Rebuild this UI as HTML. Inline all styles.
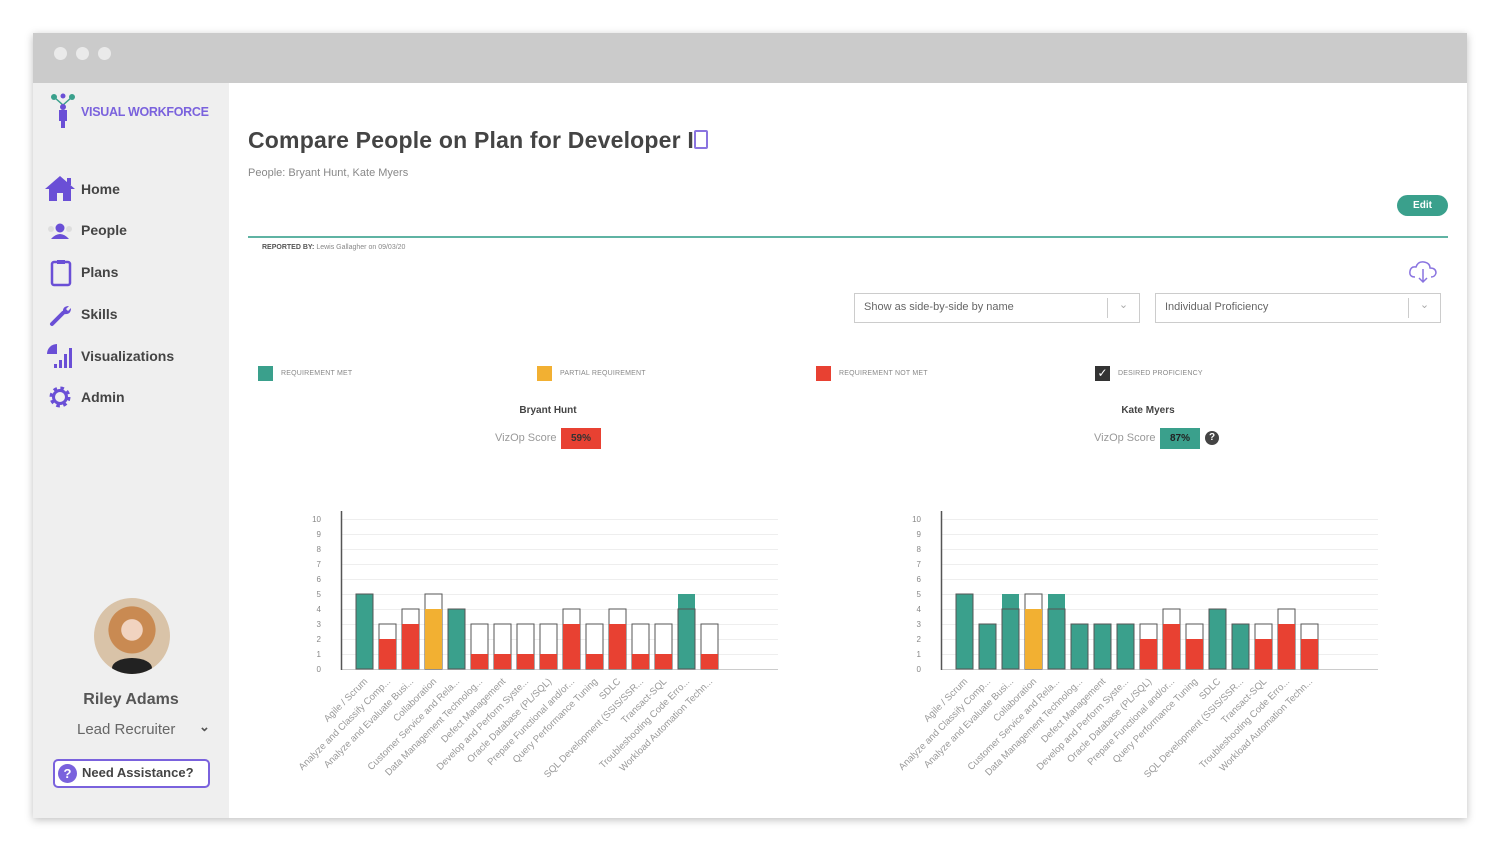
<!DOCTYPE html>
<html><head><meta charset="utf-8"><style>
*{margin:0;padding:0;box-sizing:border-box}
body{width:1500px;height:853px;background:#fff;position:relative;overflow:hidden;font-family:"Liberation Sans",sans-serif;color:#444}
.win{position:absolute;left:33px;top:33px;width:1434px;height:785px;background:#fff;box-shadow:0 2px 8px rgba(0,0,0,.25)}
.bar{position:absolute;left:0;top:0;width:1434px;height:50px;background:#cbcbcb}
.dot{position:absolute;top:14px;width:13px;height:13px;border-radius:50%;background:#eaeaea}
.side{position:absolute;left:0;top:50px;width:196px;height:735px;background:#efefef}
.nav{position:absolute;left:48px;font-weight:bold;font-size:14px;color:#444}
.abs{position:absolute}
.sel{position:absolute;height:30px;border:1px solid #ccc;font-size:11px;color:#666;padding:7px 9px}
.leg{position:absolute;font-size:7px;color:#888;letter-spacing:.2px}
.sw{position:absolute;width:15px;height:15px}
</style></head><body>
<div class="win">
 <div class="bar"><div class="dot" style="left:21px"></div><div class="dot" style="left:43px"></div><div class="dot" style="left:65px"></div></div>
 <div class="side">
  <svg class="abs" style="left:16px;top:10px" width="28" height="36" viewBox="0 0 28 36"><circle cx="5" cy="4" r="3" fill="#3aa08c"/><circle cx="23" cy="4" r="3" fill="#3aa08c"/><circle cx="14" cy="3" r="2.5" fill="#6a4fd6"/><path d="M5 4 L14 12 L23 4" stroke="#3aa08c" stroke-width="1.5" fill="none"/><circle cx="14" cy="14" r="3" fill="#6a4fd6"/><rect x="10" y="17" width="8" height="11" fill="#6a4fd6"/><rect x="12" y="27" width="4" height="8" fill="#6a4fd6"/></svg>
  <div class="abs" style="left:48px;top:22px;font-size:12.5px;font-weight:bold;color:#7a62dd;letter-spacing:-0.3px">VISUAL WORKFORCE</div>
  <svg class="abs" style="left:11px;top:92px" width="32" height="27" viewBox="0 0 32 27"><path d="M16 1 L1 14 L5 14 L5 26 L13 26 L13 18 L19 18 L19 26 L27 26 L27 14 L31 14 Z" fill="#6a4fd6"/><rect x="23" y="3" width="4" height="7" fill="#6a4fd6"/></svg>
  <div class="nav" style="top:98px">Home</div>
  <svg class="abs" style="left:14px;top:139px" width="26" height="18"><circle cx="13" cy="6" r="4.5" fill="#6a4fd6"/><path d="M4 17 Q13 7 22 17 Z" fill="#6a4fd6"/><circle cx="4" cy="7" r="3" fill="#ddd"/><circle cx="22" cy="7" r="3" fill="#ddd"/></svg>
  <div class="nav" style="top:139px">People</div>
  <svg class="abs" style="left:17px;top:176px" width="22" height="28"><rect x="2" y="3" width="18" height="23" rx="2" fill="none" stroke="#6a4fd6" stroke-width="2.5"/><rect x="7" y="1" width="8" height="4" fill="#6a4fd6"/></svg>
  <div class="nav" style="top:181px">Plans</div>
  <svg class="abs" style="left:16px;top:220px" width="24" height="24"><path d="M3 21 L14 10" stroke="#6a4fd6" stroke-width="4" stroke-linecap="round"/><path d="M14 10 Q13 3 20 3 L17 6 L19 8 L22 5 Q22 12 15 11" fill="#6a4fd6"/></svg>
  <div class="nav" style="top:223px">Skills</div>
  <svg class="abs" style="left:12px;top:259px" width="30" height="28"><path d="M2 12 A10 10 0 0 1 12 2 L12 12 Z" fill="#6a4fd6"/><rect x="9" y="22" width="3" height="4" fill="#6a4fd6"/><rect x="14" y="18" width="3" height="8" fill="#6a4fd6"/><rect x="19" y="12" width="3" height="14" fill="#6a4fd6"/><rect x="24" y="6" width="3" height="20" fill="#6a4fd6"/></svg>
  <div class="nav" style="top:265px">Visualizations</div>
  <svg class="abs" style="left:15px;top:302px" width="24" height="24" viewBox="0 0 24 24"><circle cx="12" cy="12" r="8" fill="none" stroke="#6a4fd6" stroke-width="5" stroke-dasharray="3.2 3.1"/><circle cx="12" cy="12" r="6.5" fill="none" stroke="#6a4fd6" stroke-width="3"/></svg>
  <div class="nav" style="top:306px">Admin</div>
  <div class="abs" style="left:61px;top:515px;width:76px;height:76px;border-radius:50%;background:radial-gradient(circle at 50% 42%,#f1d3c0 0 18%,#c98a52 19% 40%,#d9c3a8 41%);overflow:hidden"><div style="position:absolute;left:18px;top:60px;width:40px;height:20px;background:#222;border-radius:50% 50% 0 0"></div></div>
  <div class="abs" style="left:0;width:196px;text-align:center;top:608px;font-size:16px;font-weight:bold;color:#555">Riley Adams</div>
  <div class="abs" style="left:44px;top:638px;font-size:15px;color:#666">Lead Recruiter</div>
  <div class="abs" style="left:166px;top:636px;font-size:13px;color:#555;font-weight:bold">&#8964;</div>
  <div class="abs" style="left:20px;top:676px;width:157px;height:29px;border:2px solid #7a62dd;border-radius:5px;background:#fff"></div>
  <div class="abs" style="left:25px;top:681px;width:19px;height:19px;border-radius:50%;background:#7a62dd;color:#fff;font-size:13px;font-weight:bold;text-align:center;line-height:19px">?</div>
  <div class="abs" style="left:49px;top:682px;font-size:13px;font-weight:bold;color:#444">Need Assistance?</div>
 </div>
 <div class="abs" style="left:215px;top:94px;font-size:23px;font-weight:bold;color:#444;letter-spacing:0.2px;white-space:nowrap">Compare People on Plan for Developer I</div>
 <div class="abs" style="left:661px;top:97px;width:14px;height:19px;border:2px solid #8a74e0;border-radius:2px;background:#fff"></div>
 <div class="abs" style="left:215px;top:134px;font-size:11px;color:#888">People: Bryant Hunt, Kate Myers</div>
 <div class="abs" style="left:1364px;top:162px;width:51px;height:21px;border-radius:11px;background:#3aa08c;color:#fff;font-size:10px;font-weight:bold;text-align:center;line-height:21px">Edit</div>
 <div class="abs" style="left:215px;top:203px;width:1200px;height:2px;background:#5fb3a3"></div>
 <div class="abs" style="left:229px;top:211px;font-size:7px;color:#888"><b style="color:#555">REPORTED BY:</b> Lewis Gallagher on 09/03/20</div>
 <svg class="abs" style="left:1374px;top:226px" width="32" height="26"><path d="M8 18 Q2 18 3 12 Q4 7 9 8 Q11 2 17 3 Q23 4 23 9 Q29 9 29 14 Q28 18 24 18" fill="none" stroke="#8a74e0" stroke-width="1.5"/><path d="M16 10 L16 23 M12 19 L16 23 L20 19" fill="none" stroke="#8a74e0" stroke-width="1.5"/></svg>
 <div class="sel" style="left:821px;top:260px;width:286px">Show as side-by-side by name<span style="position:absolute;right:0;top:4px;width:32px;height:20px;border-left:1px solid #ccc;text-align:center;color:#aaa">&#8964;</span></div>
 <div class="sel" style="left:1122px;top:260px;width:286px">Individual Proficiency<span style="position:absolute;right:0;top:4px;width:32px;height:20px;border-left:1px solid #ccc;text-align:center;color:#aaa">&#8964;</span></div>
 <div class="sw" style="left:225px;top:333px;background:#3aa08c"></div><div class="leg" style="left:248px;top:337px">REQUIREMENT MET</div>
 <div class="sw" style="left:504px;top:333px;background:#f2b032"></div><div class="leg" style="left:527px;top:337px">PARTIAL REQUIREMENT</div>
 <div class="sw" style="left:783px;top:333px;background:#e84132"></div><div class="leg" style="left:806px;top:337px">REQUIREMENT NOT MET</div>
 <div class="sw" style="left:1062px;top:333px;background:#333;color:#fff;font-size:12px;line-height:15px;text-align:center">&#10003;</div><div class="leg" style="left:1085px;top:337px">DESIRED PROFICIENCY</div>
 <div class="abs" style="left:415px;top:372px;width:200px;text-align:center;font-size:10px;font-weight:bold;color:#444">Bryant Hunt</div>
 <div class="abs" style="left:462px;top:399px;font-size:11px;color:#999">VizOp Score</div>
 <div class="abs" style="left:528px;top:395px;width:40px;height:21px;background:#e84132;color:#333;font-size:10px;font-weight:bold;text-align:center;line-height:21px">59%</div>
 <div class="abs" style="left:1015px;top:372px;width:200px;text-align:center;font-size:10px;font-weight:bold;color:#444">Kate Myers</div>
 <div class="abs" style="left:1061px;top:399px;font-size:11px;color:#999">VizOp Score</div>
 <div class="abs" style="left:1127px;top:395px;width:40px;height:21px;background:#3aa08c;color:#222;font-size:10px;font-weight:bold;text-align:center;line-height:21px">87%</div>
 <div class="abs" style="left:1172px;top:398px;width:14px;height:14px;border-radius:50%;background:#444;color:#fff;font-size:10px;font-weight:bold;text-align:center;line-height:14px">?</div>
</div>
<svg class="abs" style="left:0;top:0" width="1500" height="853">
<defs>
<g id="grid" stroke="#eee" stroke-width="1">
<line x1="341" x2="778" y1="654.5" y2="654.5"/><line x1="341" x2="778" y1="639.5" y2="639.5"/><line x1="341" x2="778" y1="624.5" y2="624.5"/><line x1="341" x2="778" y1="609.5" y2="609.5"/><line x1="341" x2="778" y1="594.5" y2="594.5"/><line x1="341" x2="778" y1="579.5" y2="579.5"/><line x1="341" x2="778" y1="564.5" y2="564.5"/><line x1="341" x2="778" y1="549.5" y2="549.5"/><line x1="341" x2="778" y1="534.5" y2="534.5"/><line x1="341" x2="778" y1="519.5" y2="519.5"/>
<line x1="341" x2="778" y1="669.5" y2="669.5" stroke="#ccc"/>
<line x1="341.5" x2="341.5" y1="511" y2="670" stroke="#555" stroke-width="1.5"/>
</g>
<g id="axis" font-size="8" fill="#888" text-anchor="end" font-family="Liberation Sans">
<text x="321" y="672">0</text><text x="321" y="657">1</text><text x="321" y="642">2</text><text x="321" y="627">3</text><text x="321" y="612">4</text><text x="321" y="597">5</text><text x="321" y="582">6</text><text x="321" y="567">7</text><text x="321" y="552">8</text><text x="321" y="537">9</text><text x="321" y="522">10</text>
</g>
<g id="labels" font-size="9.6" fill="#999" text-anchor="end" font-family="Liberation Sans">
<text transform="translate(368,682) rotate(-45)">Agile / Scrum</text>
<text transform="translate(391,682) rotate(-45)">Analyze and Classify Comp...</text>
<text transform="translate(414,682) rotate(-45)">Analyze and Evaluate Busi...</text>
<text transform="translate(437,682) rotate(-45)">Collaboration</text>
<text transform="translate(460,682) rotate(-45)">Customer Service and Rela...</text>
<text transform="translate(483,682) rotate(-45)">Data Management Technolog...</text>
<text transform="translate(506,682) rotate(-45)">Defect Management</text>
<text transform="translate(529,682) rotate(-45)">Develop and Perform Syste...</text>
<text transform="translate(552,682) rotate(-45)">Oracle Database (PL/SQL)</text>
<text transform="translate(575,682) rotate(-45)">Prepare Functional and/or...</text>
<text transform="translate(598,682) rotate(-45)">Query Performance Tuning</text>
<text transform="translate(621,682) rotate(-45)">SDLC</text>
<text transform="translate(644,682) rotate(-45)">SQL Development (SSIS/SSR...</text>
<text transform="translate(667,682) rotate(-45)">Transact-SQL</text>
<text transform="translate(690,682) rotate(-45)">Troubleshooting Code Erro...</text>
<text transform="translate(713,682) rotate(-45)">Workload Automation Techn...</text>
</g>
</defs>
<use href="#grid"/><use href="#axis"/><use href="#labels"/>
<g transform="translate(600,0)"><use href="#grid"/><use href="#axis"/><use href="#labels"/></g>
<g stroke="#555" stroke-width="1">
<rect x="356" y="594" width="17" height="75" fill="#3aa08c"/>
<rect x="379" y="624" width="17" height="45" fill="#fff"/><rect x="379" y="639" width="17" height="30" fill="#e84132" stroke="none"/>
<rect x="402" y="609" width="17" height="60" fill="#fff"/><rect x="402" y="624" width="17" height="45" fill="#e84132" stroke="none"/>
<rect x="425" y="594" width="17" height="75" fill="#fff"/><rect x="425" y="609" width="17" height="60" fill="#f2b032" stroke="none"/>
<rect x="448" y="609" width="17" height="60" fill="#3aa08c"/>
<rect x="471" y="624" width="17" height="45" fill="#fff"/><rect x="471" y="654" width="17" height="15" fill="#e84132" stroke="none"/>
<rect x="494" y="624" width="17" height="45" fill="#fff"/><rect x="494" y="654" width="17" height="15" fill="#e84132" stroke="none"/>
<rect x="517" y="624" width="17" height="45" fill="#fff"/><rect x="517" y="654" width="17" height="15" fill="#e84132" stroke="none"/>
<rect x="540" y="624" width="17" height="45" fill="#fff"/><rect x="540" y="654" width="17" height="15" fill="#e84132" stroke="none"/>
<rect x="563" y="609" width="17" height="60" fill="#fff"/><rect x="563" y="624" width="17" height="45" fill="#e84132" stroke="none"/>
<rect x="586" y="624" width="17" height="45" fill="#fff"/><rect x="586" y="654" width="17" height="15" fill="#e84132" stroke="none"/>
<rect x="609" y="609" width="17" height="60" fill="#fff"/><rect x="609" y="624" width="17" height="45" fill="#e84132" stroke="none"/>
<rect x="632" y="624" width="17" height="45" fill="#fff"/><rect x="632" y="654" width="17" height="15" fill="#e84132" stroke="none"/>
<rect x="655" y="624" width="17" height="45" fill="#fff"/><rect x="655" y="654" width="17" height="15" fill="#e84132" stroke="none"/>
<rect x="678" y="594" width="17" height="75" fill="#3aa08c" stroke="none"/><rect x="678" y="609" width="17" height="60" fill="none"/>
<rect x="701" y="624" width="17" height="45" fill="#fff"/><rect x="701" y="654" width="17" height="15" fill="#e84132" stroke="none"/>
<rect x="956" y="594" width="17" height="75" fill="#3aa08c"/>
<rect x="979" y="624" width="17" height="45" fill="#3aa08c"/>
<rect x="1002" y="594" width="17" height="75" fill="#3aa08c" stroke="none"/><rect x="1002" y="609" width="17" height="60" fill="none"/>
<rect x="1025" y="594" width="17" height="75" fill="#fff"/><rect x="1025" y="609" width="17" height="60" fill="#f2b032" stroke="none"/>
<rect x="1048" y="594" width="17" height="75" fill="#3aa08c" stroke="none"/><rect x="1048" y="609" width="17" height="60" fill="none"/>
<rect x="1071" y="624" width="17" height="45" fill="#3aa08c"/>
<rect x="1094" y="624" width="17" height="45" fill="#3aa08c"/>
<rect x="1117" y="624" width="17" height="45" fill="#3aa08c"/>
<rect x="1140" y="624" width="17" height="45" fill="#fff"/><rect x="1140" y="639" width="17" height="30" fill="#e84132" stroke="none"/>
<rect x="1163" y="609" width="17" height="60" fill="#fff"/><rect x="1163" y="624" width="17" height="45" fill="#e84132" stroke="none"/>
<rect x="1186" y="624" width="17" height="45" fill="#fff"/><rect x="1186" y="639" width="17" height="30" fill="#e84132" stroke="none"/>
<rect x="1209" y="609" width="17" height="60" fill="#3aa08c"/>
<rect x="1232" y="624" width="17" height="45" fill="#3aa08c"/>
<rect x="1255" y="624" width="17" height="45" fill="#fff"/><rect x="1255" y="639" width="17" height="30" fill="#e84132" stroke="none"/>
<rect x="1278" y="609" width="17" height="60" fill="#fff"/><rect x="1278" y="624" width="17" height="45" fill="#e84132" stroke="none"/>
<rect x="1301" y="624" width="17" height="45" fill="#fff"/><rect x="1301" y="639" width="17" height="30" fill="#e84132" stroke="none"/>
</g>
</svg>
</body></html>
